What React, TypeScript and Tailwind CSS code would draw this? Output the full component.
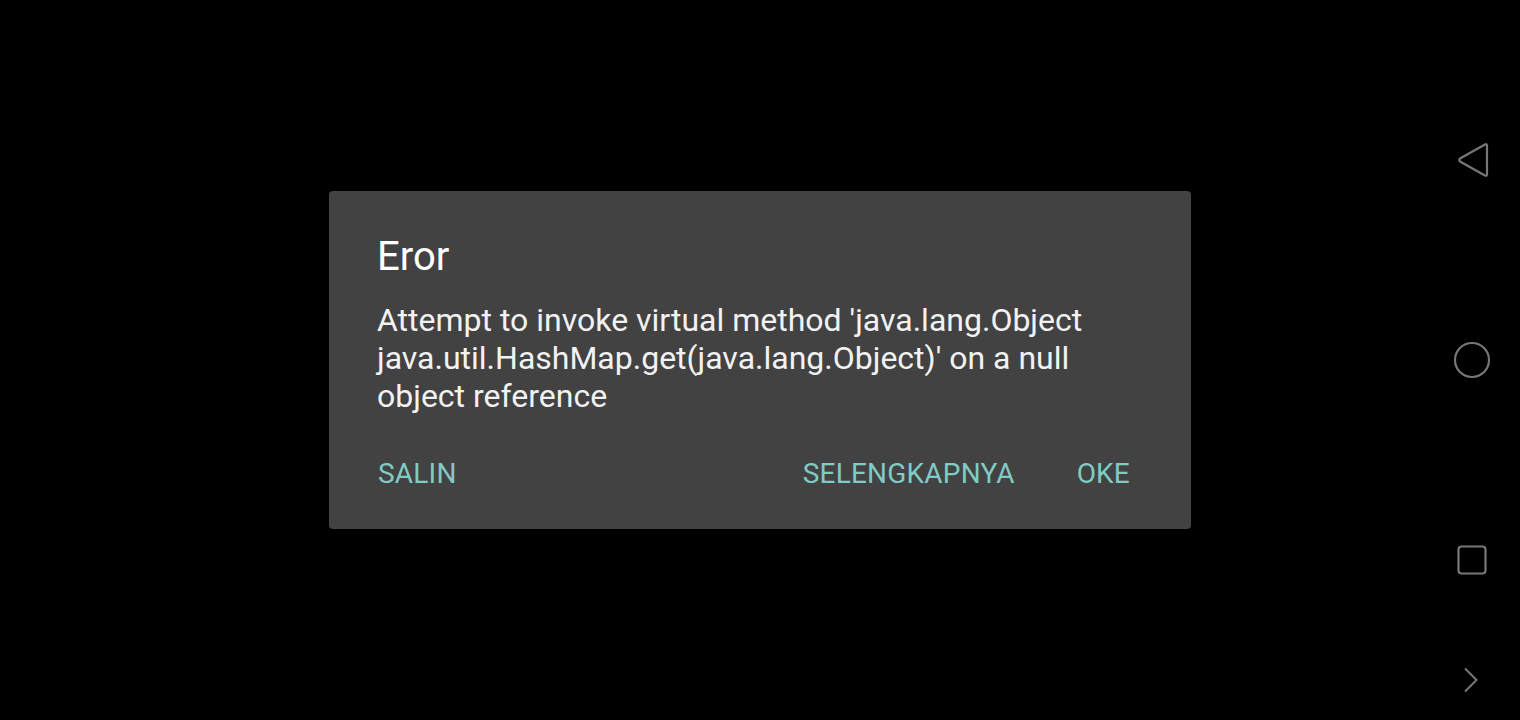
import React from "react";

export default function App() {
  return (
    <div className="relative flex h-[720px] w-[1520px] items-center justify-center bg-black" style={{ fontFamily: "Roboto, 'Noto Sans', sans-serif" }}>
      <div className="flex h-[338px] w-[862px] flex-col rounded-[4px] bg-[#424242] pl-[48px] pr-[61px] pt-[42px]">
        <div className="text-[40px] leading-[48px] text-white">Eror</div>
        <div className="mt-[20px] text-[32px] leading-[38px] text-[#f2f2f2]">
          Attempt to invoke virtual method 'java.lang.Object java.util.HashMap.get(java.lang.Object)' on a null object reference
        </div>
        <div className="mt-[43px] flex items-center text-[28px] font-normal leading-[32px] tracking-[0.2px] text-[#80cbc4]">
          <span className="ml-[1px]">SALIN</span>
          <span className="ml-auto">SELENGKAPNYA</span>
          <span className="ml-[62px]">OKE</span>
        </div>
      </div>
      <div className="absolute right-0 top-0 h-[720px] w-[100px] text-[#777777]">
        <svg className="absolute left-[36px] top-[141px]" width="34" height="38" viewBox="0 0 34 38" fill="none" stroke="currentColor" strokeWidth="2.2" strokeLinejoin="round">
          <path d="M29 3.5 Q31 2.5 31 5 L31 33 Q31 35.5 29 34.5 L4 20.5 Q2.5 19 4 17.5 Z" />
        </svg>
        <svg className="absolute left-[33px] top-[341px]" width="38" height="38" viewBox="0 0 38 38" fill="none" stroke="currentColor" strokeWidth="2.2">
          <circle cx="19" cy="19" r="17" />
        </svg>
        <svg className="absolute left-[37px] top-[545px]" width="30" height="30" viewBox="0 0 30 30" fill="none" stroke="currentColor" strokeWidth="2.2">
          <rect x="1.5" y="1.5" width="27" height="27" rx="3" />
        </svg>
        <svg className="absolute left-[43px] top-[667px]" width="16" height="26" viewBox="0 0 16 26" fill="none" stroke="currentColor" strokeWidth="2">
          <path d="M2 1.5 L13.5 13 L2 24.5" />
        </svg>
      </div>
    </div>
  );
}
